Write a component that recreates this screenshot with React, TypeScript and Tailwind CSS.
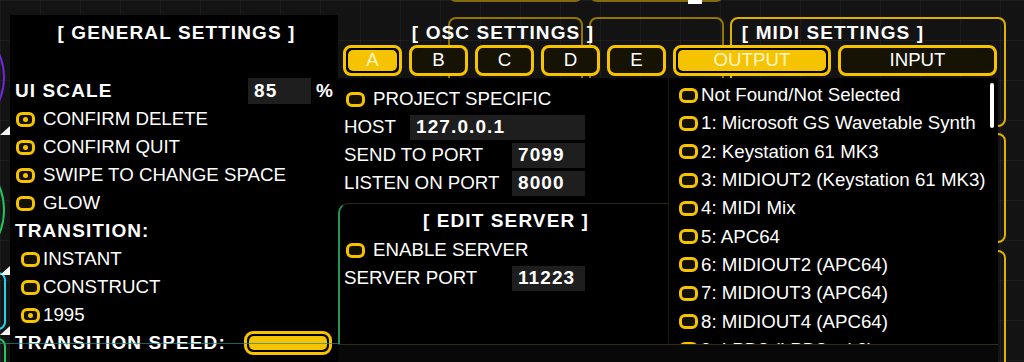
import React from 'react';

// --- small building blocks ---
const Box = ({ on = false }: { on?: boolean }) => (
  <span className="flex h-[15px] w-[19px] shrink-0 items-center justify-center rounded-[6px] border-[3px] border-[#f6c300] bg-[#141000]">
    {on && <span className="h-[5px] w-[5px] rounded-full bg-[#f6c300]" />}
  </span>
);

const Title = ({ children }: { children: React.ReactNode }) => (
  <div className="h-[24px] text-center text-[19px] leading-[24px] font-bold tracking-[1.1px] text-white">{children}</div>
);

const Field = ({ value, w }: { value: string; w: string }) => (
  <div className={`${w} flex h-[25px] items-center bg-[#1e1e1e] pl-[6px] text-[19px] font-bold tracking-[1.1px] text-white`}>{value}</div>
);

const Tab = ({ label, active = false, w = 'w-[59px]' }: { label: string; active?: boolean; w?: string }) =>
  active ? (
    <div className={`${w} h-full shrink-0 rounded-[8px] border-[3px] border-[#f6c300] bg-black p-[2px]`}>
      <div className="flex h-full items-center justify-center rounded-[5px] bg-[#f6c300] text-[18.7px] text-[#fff6cc]">{label}</div>
    </div>
  ) : (
    <div className={`${w} flex h-full shrink-0 items-center justify-center rounded-[8px] border-[3px] border-[#f6c300] bg-[#161204] text-[18.7px] text-white`}>
      {label}
    </div>
  );

const midiOut = [
  'Not Found/Not Selected',
  '1: Microsoft GS Wavetable Synth',
  '2: Keystation 61 MK3',
  '3: MIDIOUT2 (Keystation 61 MK3)',
  '4: MIDI Mix',
  '5: APC64',
  '6: MIDIOUT2 (APC64)',
  '7: MIDIOUT3 (APC64)',
  '8: MIDIOUT4 (APC64)',
  '9: LPD8 (LPD8 mk2)',
];

export default function App() {
  return (
    <div className="relative h-[362px] w-[1024px] overflow-hidden bg-[#131313] bg-[linear-gradient(rgba(255,255,255,0.045)_1px,transparent_1px),linear-gradient(90deg,rgba(255,255,255,0.045)_1px,transparent_1px)] bg-[size:40px_40px] font-['Liberation_Sans',Arial,sans-serif] text-white">
      {/* canvas nodes behind the settings window */}
      <div className="absolute left-[448px] top-[-50px] h-[52px] w-[135px] rounded-[8px] border-2 border-[#c9a000]/60" />
      <div className="absolute left-[589px] top-[-50px] h-[52px] w-[135px] rounded-[8px] border-2 border-[#c9a000]/60" />
      <div className="absolute left-[688px] top-0 h-[4px] w-[14px] bg-white" />
      <div className="absolute left-[448px] top-[17px] h-[70px] w-[135px] rounded-[8px] border-2 border-[#c9a000]/70" />
      <div className="absolute left-[589px] top-[17px] h-[70px] w-[135px] rounded-[8px] border-2 border-[#c9a000]/70" />
      <div className="absolute left-[730px] top-[17px] h-[110px] w-[276px] rounded-[8px] border-2 border-[#e0b000]" />
      <div className="absolute left-[700px] top-[133px] h-[110px] w-[306px] rounded-[8px] border-2 border-[#e0b000]" />
      <div className="absolute left-[700px] top-[250px] h-[130px] w-[306px] rounded-[8px] border-2 border-[#e0b000]" />
      <div className="absolute left-[-110px] top-[20px] h-[115px] w-[115px] rounded-full border-2 border-[#6d28d9]" />
      <div className="absolute left-[-115px] top-[150px] h-[120px] w-[120px] rounded-full border-2 border-[#22c55e]" />
      <div className="absolute left-[-60px] top-[272px] h-[58px] w-[66px] rounded-[8px] border-2 border-[#22d3ee]" />
      <div className="absolute left-[-60px] top-[338px] h-[60px] w-[66px] rounded-[8px] border-2 border-[#22c55e]" />
      {[126, 266, 326].map((t) => (
        <svg key={t} className="absolute left-0" style={{ top: t }} width="10" height="9" viewBox="0 0 10 9">
          <path d="M10 0 L10 9 L0 9 Z" fill="#f4f4f4" />
        </svg>
      ))}

      {/* settings window */}
      <div className="relative z-10 flex h-full pl-[10px] pt-[15px]">
        {/* GENERAL */}
        <div className="flex h-full w-[328px] shrink-0 flex-col bg-black pl-[5px] pt-[6px]">
          <Title>[ GENERAL SETTINGS ]</Title>
          <div className="mt-[32px] flex h-[28px] items-center">
            <span className="flex-1 text-[19px] font-bold tracking-[1.1px]">UI SCALE</span>
            <div className="flex h-[26px] w-[63px] items-center bg-[#1e1e1e] pl-[6px] text-[19px] font-bold tracking-[1.1px]">85</div>
            <span className="ml-[5px] w-[22px] text-[19px] font-bold">%</span>
          </div>
          {[
            ['CONFIRM DELETE', true],
            ['CONFIRM QUIT', true],
            ['SWIPE TO CHANGE SPACE', true],
            ['GLOW', false],
          ].map(([l, on]) => (
            <div key={l as string} className="flex h-[28px] items-center gap-[8px] pl-[1px] text-[18.7px]">
              <Box on={on as boolean} />
              <span>{l}</span>
            </div>
          ))}
          <div className="flex h-[28px] items-center text-[19px] font-bold tracking-[1.1px]">TRANSITION:</div>
          {[
            ['INSTANT', false],
            ['CONSTRUCT', false],
            ['1995', true],
          ].map(([l, on]) => (
            <div key={l as string} className="flex h-[28px] items-center gap-[3px] pl-[6px] text-[18.7px]">
              <Box on={on as boolean} />
              <span>{l}</span>
            </div>
          ))}
          <div className="flex h-[28px] items-center pr-[6px]">
            <span className="flex-1 text-[19px] font-bold tracking-[1.1px]">TRANSITION SPEED:</span>
            <div className="h-[24px] w-[88px] rounded-[9px] border-[3px] border-[#f6c300] bg-black p-[2px]">
              <div className="h-full rounded-[5px] bg-[#f6c300]" />
            </div>
          </div>
        </div>

        {/* OSC + MIDI */}
        <div className="flex h-full w-[660px] shrink-0 flex-col">
          <div className="flex h-[30px] pt-[6px]">
            <div className="w-[330px]"><Title>[ OSC SETTINGS ]</Title></div>
            <div className="flex-1"><Title>[ MIDI SETTINGS ]</Title></div>
          </div>
          <div className="flex h-[31px] gap-[7px] pl-[5px]">
            <Tab label="A" active />
            <Tab label="B" />
            <Tab label="C" />
            <Tab label="D" />
            <Tab label="E" />
            <Tab label="OUTPUT" active w="w-[158px]" />
            <Tab label="INPUT" w="w-[159px]" />
          </div>
          <div className="mt-[2px] flex h-[267px] border-b border-[#2f2b18] bg-black">
            {/* OSC */}
            <div className="flex w-[330px] shrink-0 flex-col text-[18.7px]">
              <div className="flex flex-col px-[6px] pt-[7px]">
                <div className="flex h-[28px] items-center gap-[8px] pl-[2px]">
                  <Box />
                  <span>PROJECT SPECIFIC</span>
                </div>
                <div className="flex h-[28px] items-center">
                  <span className="w-[66px]">HOST</span>
                  <Field value="127.0.0.1" w="w-[175px]" />
                </div>
                <div className="flex h-[28px] items-center">
                  <span className="w-[168px]">SEND TO PORT</span>
                  <Field value="7099" w="w-[73px]" />
                </div>
                <div className="flex h-[28px] items-center">
                  <span className="w-[168px]">LISTEN ON PORT</span>
                  <Field value="8000" w="w-[73px]" />
                </div>
              </div>
              <div className="mt-[6px] flex flex-1 flex-col rounded-tl-[10px] border-t border-l-2 border-t-[#262626] border-l-[#1c9a55] pl-[4px] pt-[5px]">
                <Title>[ EDIT SERVER ]</Title>
                <div className="mt-[3px] flex h-[28px] items-center gap-[8px] pl-[2px]">
                  <Box />
                  <span>ENABLE SERVER</span>
                </div>
                <div className="flex h-[28px] items-center">
                  <span className="w-[168px]">SERVER PORT</span>
                  <Field value="11223" w="w-[73px]" />
                </div>
              </div>
            </div>
            {/* MIDI list */}
            <div className="relative flex-1 overflow-hidden border-l border-[#1d1a0c] pt-[3px] text-[18.7px]">
              {midiOut.map((m) => (
                <div key={m} className="flex h-[28.3px] items-center gap-[3px] pl-[10px] whitespace-nowrap">
                  <Box />
                  <span>{m}</span>
                </div>
              ))}
              <div className="absolute right-[4px] top-[5px] h-[45px] w-[4px] rounded-full bg-white" />
            </div>
          </div>
          <div className="flex-1 bg-[#080808]" />
        </div>
      </div>

      {/* connection line crossing the window */}
      <div className="absolute left-0 top-[343px] z-20 h-px w-[340px] bg-[#1f8a8f]/70" />
    </div>
  );
}
